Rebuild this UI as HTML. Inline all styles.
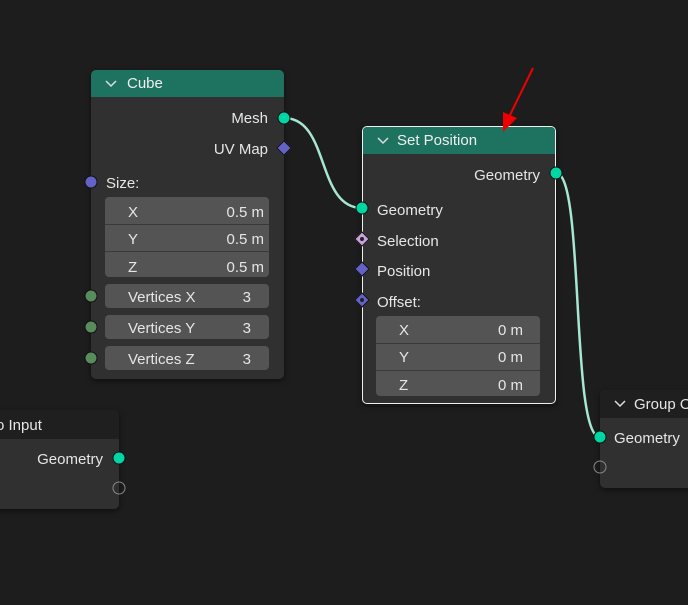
<!DOCTYPE html>
<html><head><style>
body{margin:0;width:688px;height:605px;background:#1d1d1d;overflow:hidden;position:relative;font-family:"Liberation Sans",sans-serif;font-size:15px;color:#e6e6e6}
.node{position:absolute;background:#303030;border-radius:5px;box-shadow:0 2px 6px rgba(0,0,0,.5)}
.hdr{position:absolute;left:0;right:0;top:0;background:#1e7360;border-radius:5px 5px 0 0;}
.t{position:absolute;white-space:nowrap;line-height:16px;margin-top:2px}
.f{position:absolute;background:#545454;}
.r{text-align:right}
.s{position:absolute;width:11px;height:11px;border-radius:50%;transform:translate(-50%,-50%);border:1px solid #111}
.d{position:absolute;width:9px;height:9px;transform:translate(-50%,-50%) rotate(45deg);border:1px solid #111}
.chev{position:absolute;width:12px;height:8px}
</style></head><body>
<svg width="688" height="605" style="position:absolute;left:0;top:0">
<path d="M284 118 C330 118 316 208 362 208" stroke="#a6e6d2" stroke-width="2.5" fill="none"/>
<path d="M556 173 C585 173 570 437 600 437" stroke="#a6e6d2" stroke-width="2.5" fill="none"/>
</svg>

<!-- Cube -->
<div class="node" style="left:91px;top:70px;width:193px;height:309px">
 <div class="hdr" style="height:27px"></div>
 <svg class="chev" style="left:14px;top:10px"><polyline points="1,1 6,6 11,1" stroke="#ddd" stroke-width="1.5" fill="none"/></svg>
 <div class="t" style="left:36px;top:4px;color:#eee">Cube</div>
 <div class="t r" style="right:16px;top:39px;width:100px">Mesh</div>
 <div class="t r" style="right:16px;top:70px;width:100px">UV Map</div>
 <div class="t" style="left:15px;top:104px">Size:</div>
 <div class="f" style="left:14px;top:127px;width:164px;height:80px;border-radius:4px"></div>
 <div style="position:absolute;left:14px;top:154px;width:164px;height:1px;background:#3a3a3a"></div>
 <div style="position:absolute;left:14px;top:181px;width:164px;height:1px;background:#3a3a3a"></div>
 <div class="t" style="left:37px;top:133px">X</div><div class="t r" style="right:20px;top:133px">0.5 m</div>
 <div class="t" style="left:37px;top:160px">Y</div><div class="t r" style="right:20px;top:160px">0.5 m</div>
 <div class="t" style="left:37px;top:188px">Z</div><div class="t r" style="right:20px;top:188px">0.5 m</div>
 <div class="f" style="left:14px;top:214px;width:164px;height:24px;border-radius:4px"></div>
 <div class="f" style="left:14px;top:245px;width:164px;height:24px;border-radius:4px"></div>
 <div class="f" style="left:14px;top:276px;width:164px;height:24px;border-radius:4px"></div>
 <div class="t" style="left:37px;top:218px">Vertices X</div><div class="t r" style="right:33px;top:218px">3</div>
 <div class="t" style="left:37px;top:249px">Vertices Y</div><div class="t r" style="right:33px;top:249px">3</div>
 <div class="t" style="left:37px;top:280px">Vertices Z</div><div class="t r" style="right:33px;top:280px">3</div>
</div>
<div class="s" style="left:284px;top:118px;background:#00d6a3"></div>
<div class="d" style="left:284px;top:148px;background:#6363c7"></div>
<div class="s" style="left:91px;top:182px;background:#6363c7"></div>
<div class="s" style="left:91px;top:296px;background:#598c5c"></div>
<div class="s" style="left:91px;top:327px;background:#598c5c"></div>
<div class="s" style="left:91px;top:358px;background:#598c5c"></div>

<!-- Set Position -->
<div class="node" style="left:362px;top:126px;width:192px;height:276px;border:1px solid #f0f0f0">
 <div class="hdr" style="height:27px;border-radius:4px 4px 0 0"></div>
 <svg class="chev" style="left:14px;top:10px"><polyline points="1,1 6,6 11,1" stroke="#ddd" stroke-width="1.5" fill="none"/></svg>
 <div class="t" style="left:34px;top:4px;color:#eee">Set Position</div>
 <div class="t r" style="right:15px;top:39px">Geometry</div>
 <div class="t" style="left:14px;top:74px">Geometry</div>
 <div class="t" style="left:14px;top:105px">Selection</div>
 <div class="t" style="left:14px;top:135px">Position</div>
 <div class="t" style="left:14px;top:166px">Offset:</div>
 <div class="f" style="left:13px;top:189px;width:164px;height:80px;border-radius:4px"></div>
 <div style="position:absolute;left:13px;top:216px;width:164px;height:1px;background:#3a3a3a"></div>
 <div style="position:absolute;left:13px;top:243px;width:164px;height:1px;background:#3a3a3a"></div>
 <div class="t" style="left:36px;top:194px">X</div><div class="t r" style="right:32px;top:194px">0 m</div>
 <div class="t" style="left:36px;top:221px">Y</div><div class="t r" style="right:32px;top:221px">0 m</div>
 <div class="t" style="left:36px;top:249px">Z</div><div class="t r" style="right:32px;top:249px">0 m</div>
</div>
<div class="s" style="left:556px;top:173px;background:#00d6a3"></div>
<div class="s" style="left:362px;top:208px;background:#00d6a3"></div>
<div class="d" style="left:362px;top:239px;background:#c8a2d8"></div>
<div style="position:absolute;left:360px;top:237px;width:4px;height:4px;border-radius:50%;background:#222"></div>
<div class="d" style="left:362px;top:269px;background:#6363c7"></div>
<div class="d" style="left:362px;top:300px;background:#6363c7"></div>
<div style="position:absolute;left:360px;top:298px;width:4px;height:4px;border-radius:50%;background:#222"></div>

<!-- Group Input -->
<div class="node" style="left:-10px;top:410px;width:129px;height:99px">
 <div class="hdr" style="height:29px;background:#1f1f1f"></div>
 <div class="t" style="left:6px;top:6px">o Input</div>
 <div class="t r" style="right:16px;top:40px">Geometry</div>
</div>
<div class="s" style="left:119px;top:458px;background:#00d6a3"></div>
<div class="s" style="left:119px;top:488px;background:transparent;border:1.5px solid #888;width:11px;height:11px"></div>

<!-- Group Output -->
<div class="node" style="left:600px;top:390px;width:100px;height:98px">
 <div class="hdr" style="height:28px;background:#1f1f1f"></div>
 <svg class="chev" style="left:14px;top:10px"><polyline points="1,1 6,6 11,1" stroke="#ddd" stroke-width="1.5" fill="none"/></svg>
 <div class="t" style="left:34px;top:5px">Group O</div>
 <div class="t" style="left:14px;top:39px">Geometry</div>
</div>
<div class="s" style="left:600px;top:437px;background:#00d6a3"></div>
<div class="s" style="left:600px;top:467px;background:transparent;border:1.5px solid #888;width:11px;height:11px"></div>

<svg width="688" height="605" style="position:absolute;left:0;top:0">
<line x1="533" y1="68" x2="510" y2="115" stroke="#e00" stroke-width="2"/>
<polygon points="503,132 503,112 517,118" fill="#e00"/>
</svg>
</body></html>
